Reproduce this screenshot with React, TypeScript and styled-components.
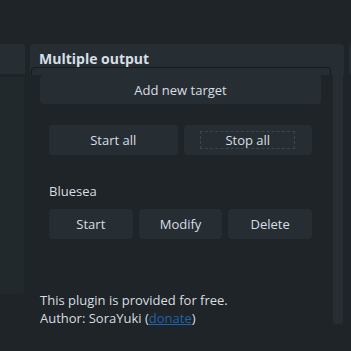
import React from "react";
import styled, { createGlobalStyle } from "styled-components";

const Global = createGlobalStyle`
  html, body {
    margin: 0;
    padding: 0;
    background: #1e2427;
  }
  body {
    font-family: "Open Sans", "DejaVu Sans", sans-serif;
    font-size: 13px;
    color: #dce1e6;
  }
`;

const Page = styled.div`
  width: 351px;
  height: 351px;
  overflow: hidden;
  display: flex;
  padding-top: 44px;
  box-sizing: border-box;
  gap: 5px;
`;

const LeftDock = styled.div`
  width: 25px;
  flex: none;
  display: flex;
  flex-direction: column;
  gap: 3px;
`;

const LeftHeader = styled.div`
  height: 30px;
  background: #272e33;
  border-top-right-radius: 4px;
`;

const LeftBody = styled.div`
  width: 24px;
  height: 217px;
  background: #22292d;
  border-bottom-right-radius: 4px;
`;

const MainDock = styled.div`
  width: 314px;
  flex: none;
  display: flex;
  flex-direction: column;
`;

const DockHeader = styled.div`
  height: 23px;
  background: #272e33;
  border-radius: 4px 4px 0 0;
  padding: 5px 9px 0;
  box-sizing: border-box;
`;

const Title = styled.span`
  position: relative;
  z-index: 1;
  font-weight: 700;
  font-size: 14px;
  line-height: 19px;
  color: #d6dee6;
`;

const Body = styled.div`
  display: flex;
  background: linear-gradient(#272e33 0 8px, transparent 8px);
  gap: 2px;
`;

const ScrollFrame = styled.div`
  margin-left: 1px;
  width: 300px;
  height: 290px;
  display: flex;
  flex-direction: column;
`;

const FrameStrip = styled.div`
  height: 8px;
  flex: none;
  box-sizing: border-box;
  background: #272e33;
  border: 1px solid #171b1e;
  border-bottom: none;
  border-radius: 4px 4px 0 0;
`;

const Viewport = styled.div`
  flex: 1;
  background: #1e2427;
  padding: 0 10px 0 9px;
  display: flex;
  flex-direction: column;
  align-items: stretch;
`;

const ScrollTrack = styled.div`
  margin-top: 8px;
  width: 10px;
  height: 249px;
  background: #272e33;
  border-radius: 0 0 3px 3px;
`;

const RightDock = styled.div`
  flex: 1;
  background: #272e33;
  border-top-left-radius: 4px;
  height: 31px;
`;

const Button = styled.div<{ $h?: number }>`
  height: ${({ $h }) => $h ?? 30}px;
  background: #272e33;
  border-radius: 4px;
  display: flex;
  align-items: center;
  justify-content: center;
  font-size: 13px;
  color: #d8dee4;
`;

const Focus = styled.span`
  outline: 1px dashed #3d464d;
  padding: 0 24px;
  line-height: 16px;
`;

const Group = styled.div<{ $top: number }>`
  margin: ${({ $top }) => $top}px 9px 0;
  display: flex;
  flex-direction: column;
`;

const Row = styled.div`
  display: flex;
  gap: 6px;

  & > * {
    flex: 1;
  }
`;

const Label = styled.div`
  line-height: 18px;
  margin-bottom: 9px;
  color: #d8dee4;
`;

const Footer = styled.div`
  margin-top: 52px;
  line-height: 18px;
  color: #d8dee4;
`;

const Link = styled.a`
  color: #1f63ad;
  text-decoration: underline;
`;

export default function App() {
  return (
    <>
      <Global />
      <Page>
        <LeftDock>
          <LeftHeader />
          <LeftBody />
        </LeftDock>
        <MainDock>
          <DockHeader>
            <Title>Multiple output</Title>
          </DockHeader>
          <Body>
            <ScrollFrame>
              <FrameStrip />
              <Viewport>
                <Button $h={29}>Add new target</Button>
                <Group $top={21}>
                  <Row>
                    <Button>Start all</Button>
                    <Button>
                      <Focus>Stop all</Focus>
                    </Button>
                  </Row>
                </Group>
                <Group $top={27}>
                  <Label>Bluesea</Label>
                  <Row>
                    <Button>Start</Button>
                    <Button>Modify</Button>
                    <Button>Delete</Button>
                  </Row>
                </Group>
                <Footer>
                  This plugin is provided for free.
                  <br />
                  Author: SoraYuki (<Link href="#">donate</Link>)
                </Footer>
              </Viewport>
            </ScrollFrame>
            <ScrollTrack />
          </Body>
        </MainDock>
        <RightDock />
      </Page>
    </>
  );
}
